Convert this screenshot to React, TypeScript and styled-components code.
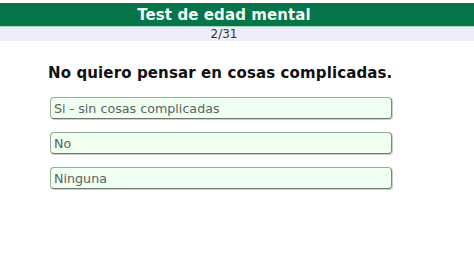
import React from "react";
import styled, { createGlobalStyle } from "styled-components";

const Global = createGlobalStyle`
  html, body { margin: 0; padding: 0; background: #ffffff; }
  body { font-family: "DejaVu Sans", Verdana, sans-serif; }
`;

const Page = styled.div`
  width: 474px;
  height: 266px;
  padding-top: 3px;
  box-sizing: border-box;
  background: #ffffff;
`;

const TitleBar = styled.div`
  height: 23px;
  background: #08744a;
  border-bottom: 1px solid #9fdcbc;
  display: flex;
  align-items: center;
  justify-content: center;
  padding-right: 26px;
`;

const Title = styled.h1`
  margin: 0;
  font-size: 15px;
  font-weight: bold;
  color: #eefff4;
  letter-spacing: 0.1px;
`;

const Counter = styled.div`
  height: 14px;
  background: #eeeefa;
  display: flex;
  align-items: center;
  justify-content: center;
  padding-right: 26px;
  font-size: 12px;
  color: #333333;
`;

const Content = styled.div`
  padding: 23px 0 0 48px;
  display: flex;
  flex-direction: column;
`;

const Question = styled.h2`
  margin: 0 0 15px 0;
  font-size: 15px;
  font-weight: bold;
  color: #111111;
  line-height: 18px;
  letter-spacing: 0.12px;
`;

const Options = styled.div`
  display: flex;
  flex-direction: column;
  gap: 13px;
  padding-left: 2px;
`;

const Option = styled.div`
  width: 342px;
  height: 22px;
  box-sizing: border-box;
  border: 1px solid #9aa99a;
  border-right-color: #7d887d;
  border-bottom-color: #6f7a6f;
  border-radius: 4px;
  background: #effff0;
  box-shadow: 1px 1px 0 #c9cfc9;
  display: flex;
  align-items: center;
  padding-left: 3px;
  font-size: 12.7px;
  color: #606060;
  cursor: pointer;
`;

const options = ["Si - sin cosas complicadas", "No", "Ninguna"];

export default function App() {
  return (
    <Page>
      <Global />
      <TitleBar>
        <Title>Test de edad mental</Title>
      </TitleBar>
      <Counter>2/31</Counter>
      <Content>
        <Question>No quiero pensar en cosas complicadas.</Question>
        <Options>
          {options.map((o) => (
            <Option key={o}>{o}</Option>
          ))}
        </Options>
      </Content>
    </Page>
  );
}
